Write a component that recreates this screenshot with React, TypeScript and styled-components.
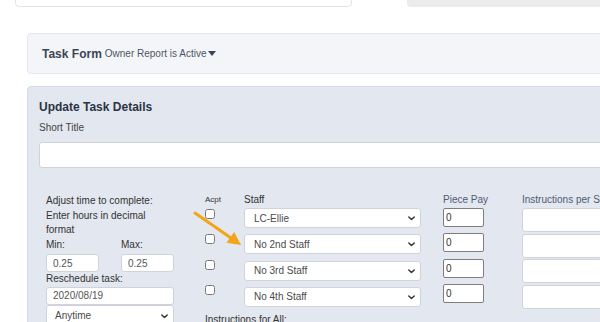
import React from 'react';
import styled, { createGlobalStyle } from 'styled-components';

const Global = createGlobalStyle`
  html, body { margin: 0; padding: 0; background: #fff; overflow: hidden; }
  body { font-family: "Liberation Sans", Arial, sans-serif; color: #333; }
  * { box-sizing: border-box; }
`;

const Page = styled.div`
  position: relative;
  width: 600px;
  height: 322px;
  overflow: hidden;
`;

const TopRow = styled.div`
  display: flex;
  align-items: flex-start;
  height: 7px;
`;

const TopCard = styled.div`
  margin-left: 15px;
  width: 337px;
  height: 8px;
  margin-top: -1px;
  background: #fff;
  border: 1px solid #e3e3e3;
  border-radius: 0 0 4px 4px;
`;

const TopGray = styled.div`
  margin-left: 55px;
  flex: 1;
  height: 7px;
  background: #ececec;
  border-radius: 0 0 0 4px;
`;

const TaskFormBar = styled.div`
  margin: 26px 0 0 27px;
  width: 600px;
  height: 41px;
  background: #f4f5f9;
  border: 1px solid #e4e7ed;
  border-radius: 4px;
  display: flex;
  align-items: center;
  padding-left: 14px;
  gap: 3px;
`;

const BarTitle = styled.span`
  font-size: 12px;
  font-weight: bold;
  color: #3b4555;
`;

const BarSub = styled.span`
  font-size: 10px;
  color: #4d5563;
  display: inline-flex;
  align-items: center;
`;

const Caret = styled.span`
  display: inline-block;
  margin-left: 1px;
  width: 0;
  height: 0;
  border-left: 4px solid transparent;
  border-right: 4px solid transparent;
  border-top: 5px solid #3b4555;
`;

const UpdatePanel = styled.div`
  margin: 12px 0 0 27px;
  width: 620px;
  height: 260px;
  background: #e3e7ef;
  border: 1px solid #d6dbe4;
  border-radius: 4px;
  padding: 13px 0 0 11px;
`;

const PanelTitle = styled.div`
  font-size: 12px;
  line-height: 14px;
  font-weight: bold;
  color: #2b3445;
`;

const FieldLabel = styled.div`
  margin-top: 8px;
  font-size: 10px;
  line-height: 12px;
  color: #444;
`;

const TitleInput = styled.input`
  display: block;
  margin-top: 8px;
  width: 600px;
  height: 26px;
  background: #fff;
  border: 1px solid #cfd3da;
  border-radius: 3px;
  outline: none;
`;

const Lower = styled.div`
  display: flex;
  align-items: flex-start;
  margin-top: 26px;
`;

const Col = styled.div<{ $w: number; $ml: number }>`
  flex: none;
  display: flex;
  flex-direction: column;
  width: ${(p) => p.$w}px;
  margin-left: ${(p) => p.$ml}px;
`;

const Note = styled.div`
  font-size: 10px;
  line-height: 14.5px;
  color: #333;
`;

const PairRow = styled.div`
  display: flex;
  justify-content: space-between;
`;

const PairField = styled.div`
  display: flex;
  flex-direction: column;
  width: 53px;
`;

const SmallInput = styled.input`
  display: block;
  width: 100%;
  height: 18px;
  margin-top: 2px;
  padding: 0 6px;
  font-family: "Liberation Sans", Arial, sans-serif;
  font-size: 10px;
  color: #555;
  background: #fff;
  border: 1px solid #d0d4da;
  border-radius: 3px;
  outline: none;
`;

const WideInput = styled(SmallInput)`
  margin-top: 0;
`;

const SelectWrap = styled.div<{ $w: number; $h: number; $mb: number }>`
  position: relative;
  width: ${(p) => p.$w}px;
  height: ${(p) => p.$h}px;
  margin-bottom: ${(p) => p.$mb}px;
  flex: none;
`;

const Select = styled.select<{ $pl: number }>`
  display: block;
  appearance: none;
  -webkit-appearance: none;
  width: 100%;
  height: 100%;
  padding: 0 0 0 ${(p) => p.$pl}px;
  font-family: "Liberation Sans", Arial, sans-serif;
  font-size: 10px;
  color: #4a4a4a;
  background: #fff;
  border: 1px solid #d0d4da;
  border-radius: 3px;
  outline: none;
`;

const Chevron = styled.svg`
  position: absolute;
  right: 6px;
  top: 50%;
  margin-top: -2px;
  pointer-events: none;
`;

const StaffGroup = styled.div`
  flex: none;
  margin-left: 30px;
  display: flex;
  flex-direction: column;
`;

const StaffRow = styled.div`
  display: flex;
`;

const AcptLabel = styled.div`
  font-size: 8px;
  line-height: 12px;
  color: #333;
  margin-left: 1px;
`;

const Check = styled.input`
  display: block;
  width: 10px;
  height: 10px;
  margin: 3px 0 12.3px 1px;
`;

const ColLabel = styled.div<{ $muted?: boolean }>`
  font-size: 10px;
  line-height: 12px;
  color: ${(p) => (p.$muted ? '#4e5b70' : '#333')};
  margin-bottom: 2px;
  white-space: nowrap;
`;

const AllLabel = styled.div`
  margin-top: 1px;
  margin-left: 1px;
  font-size: 10px;
  line-height: 12px;
  color: #333;
`;

const PayInput = styled.input`
  display: block;
  width: 41px;
  height: 19px;
  margin-bottom: 6.3px;
  padding: 0 2px;
  font-family: "Liberation Sans", Arial, sans-serif;
  font-size: 10px;
  color: #333;
  background: #fff;
  border: 1px solid #7d7d7d;
  border-radius: 2px;
  outline: none;
`;

const InstrBox = styled.textarea`
  display: block;
  width: 100px;
  height: 24px;
  margin: 0 0 1.6px;
  resize: none;
  background: #fff;
  border: 1px solid #d0d4da;
  border-radius: 3px;
  outline: none;
`;

const Pointer = styled.svg`
  position: absolute;
  left: 0;
  top: 0;
  pointer-events: none;
`;

const staff = ['LC-Ellie', 'No 2nd Staff', 'No 3rd Staff', 'No 4th Staff'];

function DropDown({ value, w, h, mb, pl }: { value: string; w: number; h: number; mb: number; pl: number }) {
  return (
    <SelectWrap $w={w} $h={h} $mb={mb}>
      <Select $pl={pl} defaultValue={value}>
        <option>{value}</option>
      </Select>
      <Chevron width="7" height="5" viewBox="0 0 7 5">
        <path d="M0.8 0.9 L3.5 3.6 L6.2 0.9" fill="none" stroke="#333" strokeWidth="1.4" strokeLinecap="round" strokeLinejoin="round" />
      </Chevron>
    </SelectWrap>
  );
}

export default function App() {
  return (
    <Page>
      <Global />
      <TopRow>
        <TopCard />
        <TopGray />
      </TopRow>

      <TaskFormBar>
        <BarTitle>Task Form</BarTitle>
        <BarSub>
          Owner Report is Active
          <Caret />
        </BarSub>
      </TaskFormBar>

      <UpdatePanel>
        <PanelTitle>Update Task Details</PanelTitle>
        <FieldLabel>Short Title</FieldLabel>
        <TitleInput type="text" />

        <Lower>
          <Col $w={128} $ml={7}>
            <Note>Adjust time to complete:</Note>
            <Note>Enter hours in decimal format</Note>
            <PairRow>
              <PairField>
                <Note>Min:</Note>
                <SmallInput defaultValue="0.25" />
              </PairField>
              <PairField>
                <Note>Max:</Note>
                <SmallInput defaultValue="0.25" />
              </PairField>
            </PairRow>
            <Note>Reschedule task:</Note>
            <WideInput defaultValue="2020/08/19" />
            <DropDown value="Anytime" w={128} h={22} mb={0} pl={8} />
          </Col>

          <StaffGroup>
            <StaffRow>
              <Col $w={40} $ml={0}>
                <AcptLabel>Acpt</AcptLabel>
                {staff.map((s) => (
                  <Check key={s} type="checkbox" />
                ))}
              </Col>
              <Col $w={177} $ml={0}>
                <ColLabel>Staff</ColLabel>
                {staff.map((s) => (
                  <DropDown key={s} value={s} w={177} h={20} mb={6.3} pl={9} />
                ))}
              </Col>
            </StaffRow>
            <AllLabel>Instructions for All:</AllLabel>
          </StaffGroup>

          <Col $w={41} $ml={22}>
            <ColLabel $muted>Piece Pay</ColLabel>
            {staff.map((s) => (
              <PayInput key={s} defaultValue="0" />
            ))}
          </Col>

          <Col $w={100} $ml={38}>
            <ColLabel $muted>Instructions per Staff</ColLabel>
            {staff.map((s) => (
              <InstrBox key={s} />
            ))}
          </Col>
        </Lower>
      </UpdatePanel>

      <Pointer width="600" height="322" viewBox="0 0 600 322">
        <line x1="195" y1="213" x2="231" y2="238" stroke="#f2a516" strokeWidth="3" strokeLinecap="round" />
        <polygon points="241,245 226.5,242.8 234.2,232" fill="#f2a516" />
      </Pointer>
    </Page>
  );
}
